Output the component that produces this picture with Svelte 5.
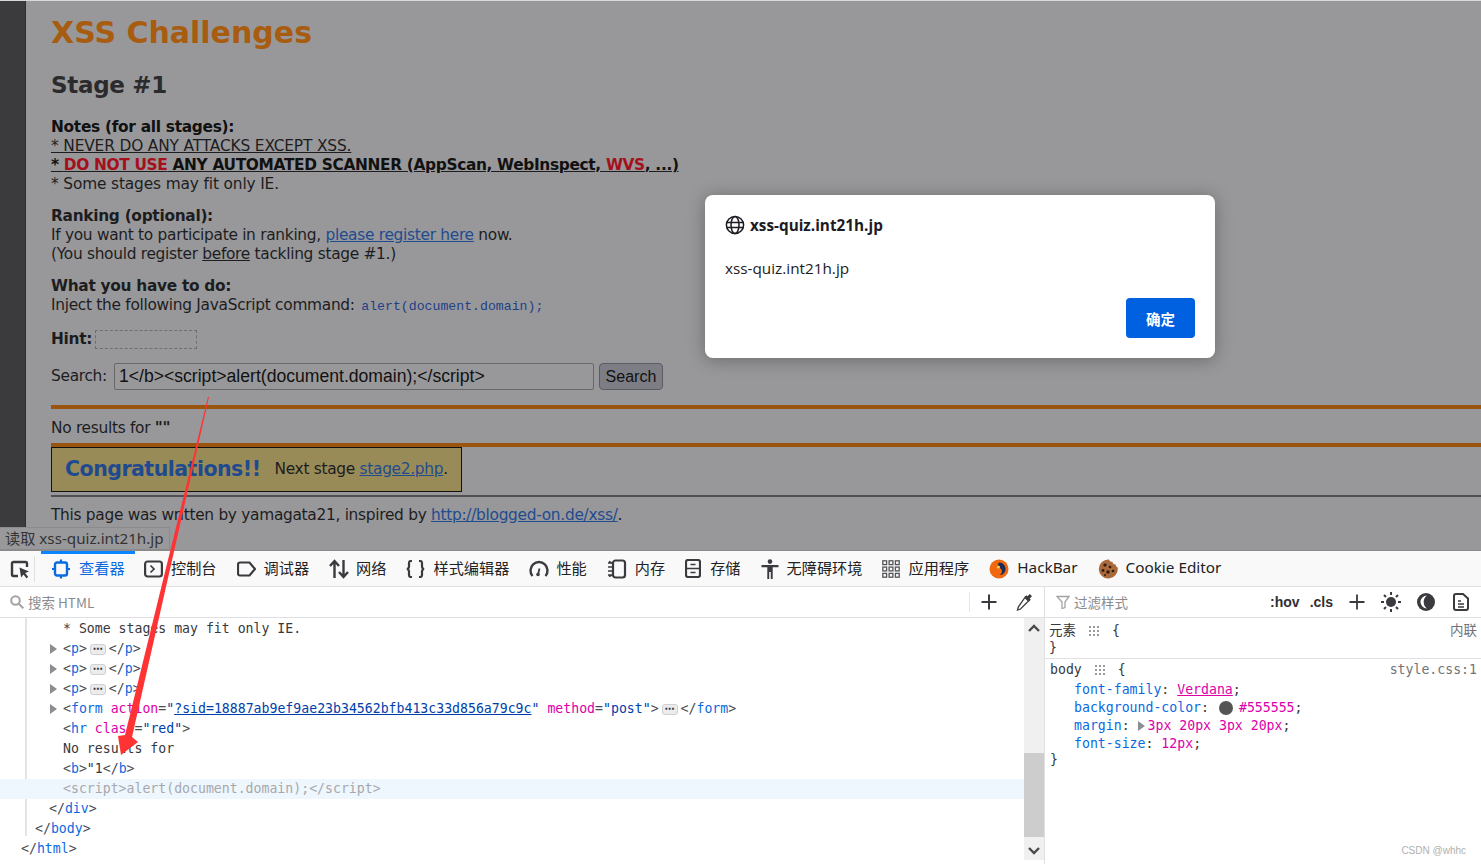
<div class="root">
  <div class="page">
    <div class="side"></div>
    <div class="content">
      <h1>XSS Challenges</h1>
      <h2>Stage #1</h2>
      <p class="notes">
        <b>Notes (for all stages):</b><br />
        <u class="wide">* NEVER DO ANY ATTACKS EXCEPT XSS.</u><br />
        <u><b class="scan">* <span class="red">DO NOT USE</span> ANY AUTOMATED SCANNER (AppScan, WebInspect, <span class="red">WVS</span>, ...)</b></u><br />
        <span class="wide">* Some stages may fit only IE.</span>
      </p>
      <p class="ranking">
        <b>Ranking (optional):</b><br />
        If you want to participate in ranking, <a href="#r">please register here</a> now.<br />
        (You should register <u>before</u> tackling stage #1.)
      </p>
      <p class="todo">
        <b>What you have to do:</b><br />
        Inject the following JavaScript command: <code>alert(document.domain);</code>
      </p>
      <div class="hint"><b>Hint:</b><span class="hintbox"></span></div>
      <div class="search">
        <span>Search:</span>
        <input value="1&lt;/b&gt;&lt;script&gt;alert(document.domain);&lt;/script&gt;" />
        <button>Search</button>
      </div>
      <hr class="orange hr1" />
      <div class="nores">No results for <b>""</b></div>
      <hr class="orange" />
      <div class="congrats"><b>Congratulations!!</b><span>Next stage <a href="#s">stage2.php</a>.</span></div>
      <hr class="gray" />
      <div class="footer">This page was written by yamagata21, inspired by <a href="#b">http://blogged-on.de/xss/</a>.</div>
    </div>
  </div>

  <div class="status">读取 xss-quiz.int21h.jp</div>

  <div class="modal">
    <div class="mtitle">
      <svg width="20" height="20" viewBox="0 0 20 20" fill="none" stroke="#1c1b22" stroke-width="1.5">
        <circle cx="10" cy="10" r="8.6" />
        <ellipse cx="10" cy="10" rx="4" ry="8.6" />
        <path d="M1.6 7.6h16.8M1.6 12.4h16.8" />
      </svg>
      <b>xss-quiz.int21h.jp</b>
    </div>
    <div class="mbody">xss-quiz.int21h.jp</div>
    <div class="mfoot"><button>确定</button></div>
  </div>

  <div class="devtools">
    <div class="tabs">
      <div class="picker">
        <svg width="22" height="22" viewBox="0 0 22 22" fill="none">
          <path d="M9 18H4.500A1.500 1.500 0 0 1 3 16.500V5.500A1.500 1.500 0 0 1 4.500 4h12A1.500 1.500 0 0 1 18 5.500V9" stroke="#3b3b3f" stroke-width="2.400" />
          <path d="M10.500 9.500l9.500 4-3.800 1.500 3 4-1.800 1.300-2.900-3.900-2.400 3z" fill="#3b3b3f" />
        </svg>
      </div>
      <div class="tab active">
        <svg width="18" height="20" viewBox="0 0 18 20" fill="none" stroke="#0a6ae0">
          <rect x="3" y="3.500" width="12" height="13" rx="2" stroke-width="2.400" />
          <path d="M9 0.500v3M9 16.500v3M0 10h3M15 10h3" stroke-width="2.200" />
        </svg>
        <span>查看器</span>
      </div>
      <div class="tab">
        <svg width="19" height="18" viewBox="0 0 19 18" fill="none" stroke="#3b3b3f" stroke-width="2.200">
          <rect x="1.100" y="1.500" width="16.800" height="15" rx="2.500" />
          <path d="M6.500 5.500l3.500 3.500-3.500 3.500" stroke-width="1.700" />
        </svg>
        <span>控制台</span>
      </div>
      <div class="tab">
        <svg width="19" height="16" viewBox="0 0 19 16" fill="none" stroke="#3b3b3f" stroke-width="2.200">
          <path d="M3 1.500h9.500L18 8l-5.500 6.500H3A2 2 0 0 1 1 12.500v-9A2 2 0 0 1 3 1.500z" />
        </svg>
        <span>调试器</span>
      </div>
      <div class="tab gap7">
        <svg width="20" height="20" viewBox="0 0 20 20" fill="none" stroke="#3b3b3f" stroke-width="2.400">
          <path d="M5.500 19V2M1 7l4.500-5L10 7M14.500 1v17M10 13l4.500 5 4.500-5" />
        </svg>
        <span>网络</span>
      </div>
      <div class="tab">
        <svg width="19" height="18" viewBox="0 0 19 18" fill="none" stroke="#3b3b3f" stroke-width="2.200">
          <path d="M6 1H4.800C3.500 1 3 1.700 3 3v3.500C3 8 2.300 8.700 1 9c1.300.3 2 1 2 2.500V15c0 1.300.5 2 1.800 2H6M13 1h1.200C15.500 1 16 1.700 16 3v3.500c0 1.500.7 2.200 2 2.500-1.300.3-2 1-2 2.500V15c0 1.300-.5 2-1.800 2H13" />
        </svg>
        <span>样式编辑器</span>
      </div>
      <div class="tab gap7">
        <svg width="20" height="18" viewBox="0 0 20 18" fill="none" stroke="#3b3b3f" stroke-width="2.400">
          <path d="M3.500 16A8.500 8.500 0 1 1 16.500 16" />
          <path d="M9 14.500l1.500-6" stroke-width="1.800" />
          <circle cx="9" cy="14.500" r="1.800" fill="#3b3b3f" stroke="none" />
        </svg>
        <span>性能</span>
      </div>
      <div class="tab">
        <svg width="20" height="20" viewBox="0 0 20 20" fill="none" stroke="#3b3b3f" stroke-width="2.200">
          <rect x="6" y="1.500" width="12" height="17" rx="2.500" />
          <path d="M1 4h4M1 8h4M1 12h4M1 16h4M2 2.500l3 1.500M2 17.500l3-1.500" stroke-width="1.400" />
        </svg>
        <span>内存</span>
      </div>
      <div class="tab w9">
        <svg width="16" height="19" viewBox="0 0 16 19" fill="none" stroke="#3b3b3f" stroke-width="2.200">
          <rect x="1" y="1" width="14" height="17" rx="2" />
          <path d="M1 9.500h14M5.500 5.500h5M5.500 13.500h5" stroke-width="1.700" />
        </svg>
        <span>存储</span>
      </div>
      <div class="tab">
        <svg width="18" height="20" viewBox="0 0 18 20" fill="#3b3b3f">
          <circle cx="9" cy="2.600" r="2.300" />
          <path d="M0.500 6h17v2.200h-5.800V20H9.800v-7H8.200v7H6.300V8.200H0.500z" />
        </svg>
        <span>无障碍环境</span>
      </div>
      <div class="tab">
        <svg width="18" height="18" viewBox="0 0 18 18" fill="none" stroke="#55555a" stroke-width="1.300">
          <rect x="0.800" y="0.800" width="3.800" height="3.800" /><rect x="7.100" y="0.800" width="3.800" height="3.800" /><rect x="13.400" y="0.800" width="3.800" height="3.800" />
          <rect x="0.800" y="7.100" width="3.800" height="3.800" /><rect x="7.100" y="7.100" width="3.800" height="3.800" /><rect x="13.400" y="7.100" width="3.800" height="3.800" />
          <rect x="0.800" y="13.400" width="3.800" height="3.800" /><rect x="7.100" y="13.400" width="3.800" height="3.800" /><rect x="13.400" y="13.400" width="3.800" height="3.800" />
        </svg>
        <span>应用程序</span>
      </div>
      <div class="tab">
        <svg width="20" height="20" viewBox="0 0 20 20">
          <circle cx="10" cy="10" r="9.500" fill="#f0690f" />
          <path d="M10 3.500a6.500 6.500 0 0 1 5.500 10 6 6 0 0 1-5 2.500c2-1 3-3 2.200-5-.7-1.800-2.700-2-3.700-3.200-.6-1.200.2-3 1-4.300z" fill="#1c2a58" />
          <circle cx="9.500" cy="8" r="1.500" fill="#ffd23a" />
        </svg>
        <span class="lat">HackBar</span>
      </div>
      <div class="tab">
        <svg width="20" height="20" viewBox="0 0 20 20">
          <path d="M11 0.500c.5 1.800 2 2.600 3.500 2.300 0 1.800 1.400 3 3.200 2.800.2 1.500 1 2.500 2 3A9.500 9.500 0 1 1 11 0.500z" fill="#a9693a" />
          <g fill="#2d1a10">
            <circle cx="7" cy="6" r="1.600" /><circle cx="12" cy="8" r="1.300" /><circle cx="5" cy="11.500" r="1.400" />
            <circle cx="10" cy="13" r="1.700" /><circle cx="15" cy="12" r="1.300" /><circle cx="7" cy="16" r="1" />
          </g>
        </svg>
        <span class="lat">Cookie Editor</span>
      </div>
    </div>

    <div class="panes">
      <div class="left">
        <div class="searchrow">
          <svg width="14" height="14" viewBox="0 0 14 14" fill="none" stroke="#a3a3a6" stroke-width="2">
            <circle cx="5.500" cy="5.500" r="4.300" />
            <path d="M8.800 8.800l4.500 4.500" />
          </svg>
          <span class="ph">搜索 HTML</span>
          <span class="spacer"></span>
          <span class="vsep"></span>
          <svg class="plus" width="16" height="16" viewBox="0 0 16 16" stroke="#3b3b3f" stroke-width="2"><path d="M8 0.500v15M0.500 8h15" /></svg>
          <svg class="dropper" width="18" height="18" viewBox="0 0 18 18" fill="none" stroke="#3b3b3f">
            <path d="M10 4.500l3.500 3.500-8 8-3 1 .9-3.100z" stroke-width="1.300" />
            <path d="M9.500 4l1.800-1.800 1.200 1.100L14.800 1l2.200 2.200-2.300 2.300 1.100 1.200-1.800 1.800z" fill="#3b3b3f" stroke="none" />
          </svg>
        </div>
        <div class="tree">
          <div class="code">
            <div class="gutter"></div>
            <div class="row l4 txt">* Some stages may fit only IE.</div>
            {#each [0, 1, 2] as i (i)}
              <div class="row l4">
                <span class="tw"></span><span class="br">&lt;</span><span class="tag">p</span><span class="br">&gt;</span><span class="more">⋯</span><span class="br">&lt;/</span><span class="tag">p</span><span class="br">&gt;</span>
              </div>
            {/each}
            <div class="row l4">
              <span class="tw"></span><span class="br">&lt;</span><span class="tag">form</span> <span class="attr">action</span><span class="br">=</span><span class="val">"<u>?sid=18887ab9ef9ae23b34562bfb413c33d856a79c9c</u>"</span> <span class="attr">method</span><span class="br">=</span><span class="val">"post"</span><span class="br">&gt;</span><span class="more">⋯</span><span class="br">&lt;/</span><span class="tag">form</span><span class="br">&gt;</span>
            </div>
            <div class="row l4"><span class="br">&lt;</span><span class="tag">hr</span> <span class="attr">class</span><span class="br">=</span><span class="val">"red"</span><span class="br">&gt;</span></div>
            <div class="row l4 txt">No results for</div>
            <div class="row l4"><span class="br">&lt;</span><span class="tag">b</span><span class="br">&gt;</span><span class="txt">"1</span><span class="br">&lt;/</span><span class="tag">b</span><span class="br">&gt;</span></div>
            <div class="row l4 sel">&lt;script&gt;alert(document.domain);&lt;/script&gt;</div>
            <div class="row l3"><span class="br">&lt;/</span><span class="tag">div</span><span class="br">&gt;</span></div>
            <div class="row l2"><span class="br">&lt;/</span><span class="tag">body</span><span class="br">&gt;</span></div>
            <div class="row l1"><span class="br">&lt;/</span><span class="tag">html</span><span class="br">&gt;</span></div>
          </div>
          <div class="scroll">
            <svg width="20" height="20" viewBox="0 0 20 20" fill="none" stroke="#4a4a4a" stroke-width="2.400"><path d="M5 13l5-5 5 5" /></svg>
            <div class="track"><div class="thumb"></div></div>
            <svg width="20" height="20" viewBox="0 0 20 20" fill="none" stroke="#4a4a4a" stroke-width="2.400"><path d="M5 8l5 5 5-5" /></svg>
          </div>
        </div>
      </div>

      <div class="right">
        <div class="searchrow rs">
          <svg width="14" height="14" viewBox="0 0 14 14" fill="none" stroke="#a3a3a6" stroke-width="1.300">
            <path d="M1 1.500h12L9 7v5.500l-3 1V7z" />
          </svg>
          <span class="ph">过滤样式</span>
          <span class="spacer"></span>
          <span class="pill">:hov</span>
          <span class="pill cls">.cls</span>
          <svg class="plus2" width="16" height="16" viewBox="0 0 16 16" stroke="#3b3b3f" stroke-width="1.800"><path d="M8 0.500v15M0.500 8h15" /></svg>
          <svg class="ic" width="20" height="20" viewBox="0 0 20 20" fill="#3b3b3f" stroke="#3b3b3f" stroke-width="2">
            <circle cx="10" cy="10" r="5" stroke="none" />
            <path d="M10 0v3M10 17v3M0 10h3M17 10h3M3 3l2 2M15 15l2 2M3 17l2-2M15 5l2-2" />
          </svg>
          <svg class="ic" width="18" height="18" viewBox="0 0 18 18">
            <circle cx="9" cy="9" r="9" fill="#3b3b3f" />
            <path d="M10 2.500a6.500 6.500 0 0 0 0 13 8 8 0 0 1 0-13z" fill="#fff" />
          </svg>
          <svg class="ic doc" width="16" height="18" viewBox="0 0 16 18" fill="none" stroke="#3b3b3f" stroke-width="2">
            <path d="M3 1h7l5 4.500V15a2 2 0 0 1-2 2H3a2 2 0 0 1-2-2V3a2 2 0 0 1 2-2z" />
            <path d="M5 8h3M5 11h6M5 14h6" stroke-width="1.300" />
          </svg>
        </div>
        <div class="rules">
          <div class="rule inline">
            <div class="sel1 r1"><span class="cjk">元素</span> <span class="dots"></span> {'{'}<span class="src cjk">内联</span></div>
            <div class="sel1">{'}'}</div>
          </div>
          <div class="rule">
            <div class="sel1 r2">body <span class="dots"></span> {'{'}<span class="src">style.css:1</span></div>
            <div class="prop"><span class="pn">font-family</span>: <span class="pv"><u>Verdana</u></span>;</div>
            <div class="prop"><span class="pn">background-color</span>: <span class="swatch"></span><span class="pv">#555555</span>;</div>
            <div class="prop"><span class="pn">margin</span>: <span class="tw small"></span><span class="pv">3px 20px 3px 20px</span>;</div>
            <div class="prop"><span class="pn">font-size</span>: <span class="pv">12px</span>;</div>
            <div class="sel1 r3">{'}'}</div>
          </div>
          <div class="mark">CSDN @whhc</div>
        </div>
      </div>
    </div>
  </div>

  <svg class="arrow" width="120" height="370" viewBox="0 0 120 370">
    <path d="M108 7 L109 7 L32 347 L38 352 L21 365 L18 346 L25 345 Z" fill="#ff3333" />
  </svg>
</div>

<style>
  :global(body) {
    margin: 0;
    background: #fff;
    font-family: "DejaVu Sans", sans-serif;
  }

  .root {
    position: relative;
    width: 1481px;
    height: 864px;
    overflow: hidden;
  }

  .page {
    display: flex;
    height: 549px;
    border-top: 1px solid #d8d8d8;
    background: #98989a;
    color: #1d1d1f;
    font-size: 15.400px;
    letter-spacing: -0.300px;
    line-height: 19px;
  }

  .side {
    box-sizing: border-box;
    width: 26px;
    background: #3b3b3d;
    border-right: 1px solid #2d2d2f;
  }

  .content {
    flex: 1;
    padding-left: 25px;
    min-width: 0;
  }

  h1 {
    margin: 12px 0 0;
    font-size: 30px;
    letter-spacing: 0;
    line-height: 40px;
    color: #a85c10;
  }

  h2 {
    margin: 16px 0 0;
    font-size: 23px;
    line-height: 32px;
    letter-spacing: -0.300px;
    color: #2b2b2d;
  }

  p {
    margin: 0;
  }

  .wide {
    letter-spacing: -0.150px;
  }

  .scan {
    letter-spacing: -0.340px;
  }

  .notes {
    margin-top: 17px;
  }

  .notes b {
    color: #111;
  }

  .ranking {
    margin-top: 13px;
  }

  .todo {
    margin-top: 13px;
  }

  .red {
    color: #a50f1c;
  }

  a {
    color: #1f4b8f;
  }

  code {
    margin-left: 2px;
    font-family: "Liberation Mono", monospace;
    font-size: 13.200px;
    letter-spacing: 0;
    color: #1f3f88;
  }

  .hint {
    display: flex;
    align-items: center;
    margin-top: 14px;
    height: 19px;
  }

  .hintbox {
    width: 100px;
    height: 17px;
    margin-left: 3px;
    border: 1px dashed #6f6f6f;
  }

  .search {
    display: flex;
    align-items: center;
    margin-top: 14px;
    height: 27px;
  }

  .search input {
    box-sizing: border-box;
    width: 480px;
    height: 27px;
    margin-left: 7px;
    padding: 0 4px;
    border: 1px solid #68686a;
    border-radius: 2px;
    background: #98989a;
    color: #111;
    font: 17.600px "Liberation Sans", sans-serif;
  }

  .search button {
    box-sizing: border-box;
    width: 64px;
    height: 27px;
    margin-left: 5px;
    padding: 0;
    border: 1px solid #5d5d60;
    border-radius: 4px;
    background: #7d7d85;
    color: #111;
    font: 16px "Liberation Sans", sans-serif;
  }

  hr {
    margin: 0;
    border: 0;
  }

  .orange {
    height: 4px;
    background: #99540f;
  }

  .hr1 {
    margin-top: 15px;
  }

  .nores {
    margin-top: 9px;
    height: 25px;
    line-height: 20px;
  }

  .congrats {
    box-sizing: border-box;
    display: flex;
    align-items: center;
    width: 411px;
    height: 45px;
    padding-left: 13px;
    border: 1px solid #111;
    background: #998b57;
    white-space: nowrap;
  }

  .congrats b {
    font-size: 20.500px;
    letter-spacing: -0.500px;
    color: #1f4a8f;
  }

  .congrats span {
    margin-left: 14px;
  }

  .gray {
    height: 2px;
    margin-top: 3px;
    background: #505052;
  }

  .footer {
    margin-top: 9px;
  }

  .status {
    position: absolute;
    left: 0;
    top: 527px;
    box-sizing: border-box;
    width: 170px;
    height: 23px;
    padding-left: 5px;
    border: 1px solid #8b8b8d;
    border-left: 0;
    background: #99999b;
    color: #333;
    font: 15.200px/21px "Noto Sans", "Noto Sans CJK SC", sans-serif;
  }

  .modal {
    position: absolute;
    left: 705px;
    top: 195px;
    box-sizing: border-box;
    width: 510px;
    height: 163px;
    padding: 20px;
    border-radius: 8px;
    background: #fff;
    color: #1c1b22;
    box-shadow: 0 2px 18px rgba(0, 0, 0, 0.3);
    font-family: "Open Sans", "Noto Sans CJK SC", sans-serif;
  }

  .mtitle {
    display: flex;
    align-items: center;
    gap: 5px;
    height: 20px;
    font-size: 15.300px;
  }

  .mbody {
    margin-top: 23px;
    font-size: 15.300px;
    line-height: 20px;
  }

  .mfoot {
    display: flex;
    justify-content: flex-end;
    margin-top: 20px;
  }

  .mfoot button {
    width: 69px;
    height: 40px;
    border: 0;
    border-radius: 4px;
    background: #0061e0;
    color: #fff;
    font: 700 14.500px "Noto Sans CJK SC", sans-serif;
  }

  .devtools {
    height: 314px;
    background: #fff;
    color: #38383d;
    font-family: "Noto Sans CJK SC", sans-serif;
  }

  .tabs {
    box-sizing: border-box;
    display: flex;
    align-items: center;
    gap: 20px;
    height: 37px;
    border-top: 1px solid #8a8a8a;
    border-bottom: 1px solid #e0e0e2;
    background: #f9f9fa;
    font-size: 15.200px;
    line-height: 20px;
    color: #222;
  }

  .picker {
    display: flex;
    align-items: center;
    box-sizing: border-box;
    width: 35px;
    height: 26px;
    padding-left: 9px;
    margin-right: -14px;
    border-right: 1px solid #e0e0e2;
  }

  .tab {
    display: flex;
    align-items: center;
    gap: 8px;
    height: 100%;
    white-space: nowrap;
  }

  .tab span {
    margin-top: -3px;
  }

  .gap7 {
    gap: 7px;
  }

  .w9 {
    gap: 9px;
  }

  .active {
    gap: 9px;
    padding-right: 10px;
    margin-right: -10.600px;
    color: #0a6ae0;
    box-shadow: inset 0 3px 0 #0a84ff;
  }

  .active svg {
    margin-left: 11px;
  }

  .lat {
    font: 15.300px "Noto Sans", sans-serif;
  }

  .panes {
    display: flex;
    height: 277px;
  }

  .left {
    width: 1044px;
    flex: none;
    display: flex;
    flex-direction: column;
  }

  .right {
    flex: 1;
    border-left: 1px solid #e0e0e2;
    min-width: 0;
  }

  .searchrow {
    box-sizing: border-box;
    display: flex;
    align-items: center;
    height: 31px;
    padding-left: 10px;
    border-bottom: 1px solid #e0e0e2;
  }

  .rs {
    padding-left: 11px;
  }

  .ph {
    margin-left: 4px;
    color: #8a8a8f;
    font-size: 13.500px;
  }

  .spacer {
    flex: 1;
  }

  .vsep {
    width: 1px;
    height: 20px;
    background: #e6e6e8;
  }

  .plus {
    margin-left: 11px;
  }

  .dropper {
    margin: 0 11px 0 18px;
  }

  .pill {
    font: 700 14px "Liberation Sans", sans-serif;
    color: #2f2f33;
  }

  .cls {
    margin-left: 10px;
  }

  .plus2 {
    margin-left: 16px;
  }

  .ic {
    margin-left: 16px;
  }

  .doc {
    margin-left: 18px;
    margin-right: 12px;
  }

  .tree {
    flex: 1;
    display: flex;
    min-height: 0;
  }

  .code {
    position: relative;
    flex: 1;
    padding-top: 1px;
    font: 13.200px/20px "DejaVu Sans Mono", monospace;
  }

  .gutter {
    position: absolute;
    left: 25px;
    top: 0;
    width: 2px;
    height: 218px;
    background: #e4e4e6;
  }

  .row {
    position: relative;
    height: 20px;
    white-space: pre;
  }

  .l1 {
    padding-left: 21px;
  }

  .l2 {
    padding-left: 35px;
  }

  .l3 {
    padding-left: 49px;
  }

  .l4 {
    padding-left: 63px;
  }

  .txt {
    color: #38383d;
  }

  .br {
    color: #4a4a4f;
  }

  .tag {
    color: #0a6ae0;
  }

  .attr {
    color: #dd00a9;
  }

  .val {
    color: #003eaa;
  }

  .sel {
    background: #eef7fd;
    color: #a8a8ad;
  }

  .tw {
    display: inline-block;
    width: 0;
    height: 0;
    margin-left: -13px;
    margin-right: 6px;
    border-left: 7px solid #8e8e92;
    border-top: 5px solid transparent;
    border-bottom: 5px solid transparent;
    vertical-align: -0.500px;
  }

  .tw.small {
    margin-left: 0;
    margin-right: 3px;
  }

  .more {
    display: inline-block;
    box-sizing: border-box;
    width: 16px;
    height: 11px;
    margin: 0 3px;
    border: 1px solid #d0d0d4;
    border-radius: 3px;
    background: #ececee;
    color: #333;
    font: 700 10px/8px "DejaVu Sans", sans-serif;
    text-align: center;
    vertical-align: 1px;
  }

  .scroll {
    width: 20px;
    flex: none;
    display: flex;
    flex-direction: column;
    background: #f0f0f0;
    height: 242px;
  }

  .track {
    flex: 1;
    padding-top: 115px;
  }

  .thumb {
    height: 84px;
    background: #cdcdcd;
  }

  .rules {
    position: relative;
    height: 246px;
    font: 13.200px/18px "DejaVu Sans Mono", monospace;
    color: #38383d;
  }

  .rule {
    padding: 2px 4px 3px 5px;
  }

  .rule.inline {
    box-sizing: border-box;
    height: 41px;
    padding: 0 4px;
    border-bottom: 1px solid #e0e0e2;
  }

  .r1 {
    height: 21px;
    line-height: 22px;
  }

  .r2 {
    margin-bottom: 2px;
  }

  .r3 {
    margin-top: -2px;
  }

  .sel1 {
    position: relative;
  }

  .cjk {
    font-family: "Noto Sans CJK SC", sans-serif;
    font-size: 13.500px;
  }

  .src {
    position: absolute;
    right: 0;
    color: #737378;
  }

  .dots {
    display: inline-block;
    width: 12px;
    height: 12px;
    margin: 0 4px;
    vertical-align: -2px;
    background:
      radial-gradient(circle, #9a9a9e 1.200px, transparent 1.400px) 0 0 / 4px 4px;
  }

  .prop {
    padding-left: 24px;
    white-space: pre;
  }

  .pn {
    color: #0a6ae0;
  }

  .pv {
    color: #dd00a9;
  }

  .swatch {
    display: inline-block;
    width: 14px;
    height: 14px;
    margin: 0 6px 0 2px;
    border-radius: 50%;
    background: #555;
    vertical-align: -3px;
  }

  .mark {
    position: absolute;
    right: 15px;
    top: 227px;
    color: #b0b0b0;
    font: 10px "Liberation Sans", sans-serif;
  }

  .arrow {
    position: absolute;
    left: 100px;
    top: 390px;
    pointer-events: none;
  }
</style>
